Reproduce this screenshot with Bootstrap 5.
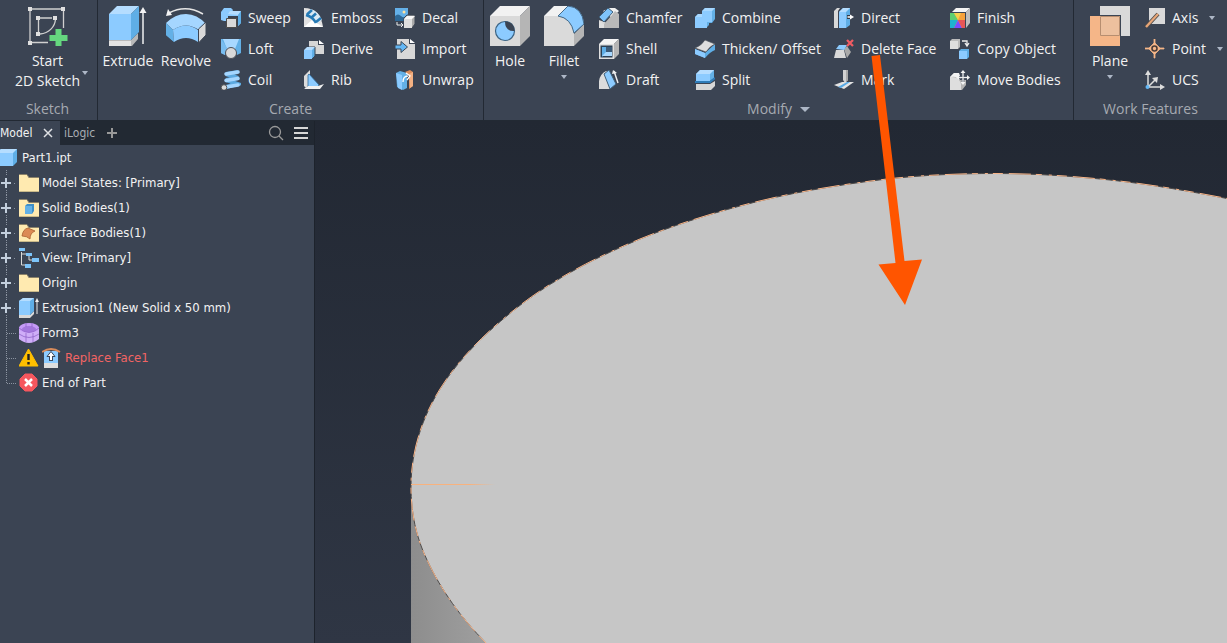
<!DOCTYPE html>
<html lang="en">
<head>
<meta charset="utf-8">
<meta name="viewport" content="width=device-width, initial-scale=1">
<title>Part1.ipt</title>
<link href="https://cdn.jsdelivr.net/npm/bootstrap@5.3.0/dist/css/bootstrap.min.css" rel="stylesheet">
<style>
:root{--panel:#3b4453;--dark:#222933}
body{background:var(--dark);color:#f2f2f2;font-family:"Open Sans","Noto Sans",sans-serif;font-size:14px;line-height:20px}
svg{display:block;flex:none}
button{color:inherit;background:none;border:0;padding:0;white-space:nowrap}
.ribbon{background:var(--panel);height:121px;border-bottom:1px solid var(--dark)}
.group{border-right:1px solid var(--dark);flex:none}
.group.wide{flex:1 0 0;border-right:0}
.tools{height:99px;padding-top:2px}
.stack{display:grid;grid-template-rows:repeat(3,31px);flex:none}
.small-tool{display:flex;align-items:center;gap:7px;text-align:left}
.big-tool{display:flex;flex-direction:column;align-items:center;padding-top:4px;flex:none;align-self:flex-start}
.big-tool svg.ic{margin-bottom:5px}
.group-name{color:#a6aab1;text-align:center;line-height:20px}
.caret{width:0;height:0;border:3px solid transparent;border-top:4px solid #adb7c6;border-bottom:0;display:inline-block;flex:none}
.caret.lg{border-width:5px 5px 0}
.sketch-caret{right:7px;top:71px}
.g-sketch{width:98px;padding-right:2px}.g-create{width:386px}.g-modify{width:590px}
.after-big{margin-left:7px}
.lead-in{padding-left:4px}
.w-52{width:52px}.w-56{width:56px}.w-83{width:83px}.w-91{width:91px}.w-96{width:96px}.w-116{width:116px}.w-139{width:139px}
.browser{width:315px;background:var(--panel);border-right:1px solid #1d232c;font-family:"DejaVu Sans Condensed","DejaVu Sans",sans-serif;font-size:13px;flex:none}
.tabs{background:var(--dark);height:24px;font-size:12px}
.tab-on{background:var(--panel);width:60px;height:24px;padding-right:7px}
.add-tab{margin-left:11px}
.dim{color:#a9adb3}
.tree{margin:0;padding:0;list-style:none}
.tree li{height:25px;display:flex;align-items:center;gap:3px;white-space:nowrap}
.twig{width:16px;height:25px;flex:none}
.failed{color:#f26464}
.view{background:linear-gradient(#222833,#2f3644);min-width:0}
.pointer{position:absolute;left:860px;top:50px;pointer-events:none}
</style>
</head>
<body class="d-flex flex-column vh-100 overflow-hidden position-relative">

<header class="ribbon d-flex">
  <section class="group g-sketch" aria-label="Sketch">
    <div class="tools position-relative">
      <button class="big-tool w-100">
        <svg class="ic" width="42" height="40" viewBox="0 0 42 40" fill="none" stroke="#d0d0d0" stroke-width="1.3"><path d="M5 3H34M3 5V35M36.500 5V22M5 36.500H21"/><path d="M13 12H25M11.500 14V26M28.500 13C28 21 22 27 13 28"/><g fill="#e0e0e0" stroke="none"><path d="M1 1h4v4H1zM34 1h4v4h-4zM1 35h4v4H1zM9 10h4v4H9zM26 10h4v4h-4zM9 26h4v4H9z"/></g><path d="M31.500 23v18M22.500 32h18" stroke="#65d77f" stroke-width="6"/></svg>
        <span>Start</span><span>2D Sketch</span>
      </button>
      <span class="caret sketch-caret position-absolute"></span>
    </div>
    <div class="group-name">Sketch</div>
  </section>

  <section class="group g-create" aria-label="Create">
    <div class="tools d-flex lead-in">
      <button class="big-tool w-52">
        <svg class="ic" width="40" height="40" viewBox="0 0 40 40"><path d="M1 34h22l7-7v6l-6 7H1z" fill="#b8b8b8"/><path d="M1 35h22v5H1z" fill="#e2e2e2"/><path d="M1 8h22v26H1z" fill="#8ccbff"/><path d="M1 8l8-8h22l-8 8z" fill="#b5ddff"/><path d="M23 8l8-8v26l-8 8z" fill="#5faee6"/><path d="M35 38V4" stroke="#f0f0f0" stroke-width="1.500"/><path d="M35 1l3.500 6h-7z" fill="#f4f4f4"/></svg>
        <span>Extrude</span>
      </button>
      <button class="big-tool w-56 ms-1">
        <svg class="ic" width="40" height="40" viewBox="0 0 40 40"><path d="M0 17L8 36 0 29z" fill="#63b0e6"/><path d="M0 17Q9 8 20 8T40 18L33 24Q20 15 7 24z" fill="#a5d6ff"/><path d="M0 17l7 7 1 12-8-7z" fill="#63b0e6"/><path d="M7 24Q20 15 32 24V36Q20 28 8 36z" fill="#8ccbff"/><path d="M32.500 23L40 16v13l-7.500 8z" fill="#d9d9d9" stroke="#3b4453"/><path d="M3 7Q20-2 37 8" fill="none" stroke="#e6e6e6" stroke-width="1.500"/><path d="M0 10L2 3l4 6z" fill="#f4f4f4"/></svg>
        <span>Revolve</span>
      </button>
      <div class="stack after-big w-83">
        <button class="small-tool"><svg width="20" height="20" viewBox="0 0 20 20"><path d="M0 4l3-4h7l2 2-1 2h6l3-1v12l-3 3V8H7v5H3l-3-1z" fill="#8ccbff"/><path d="M7 6l2-3h11l-3 4z" fill="#b5ddff"/><path d="M17 7l3-4v12l-3 3z" fill="#5faee6"/><path d="M5.500 10.500h10v9h-10z" fill="#d9d9d9" stroke="#4d4b49"/></svg>Sweep</button>
        <button class="small-tool"><svg width="20" height="20" viewBox="0 0 20 20"><path d="M0 0h20v14l-4 2-2-6H6l-2 6-4-2z" fill="#63b0e6"/><path d="M2 0h16l-4 10H6z" fill="#a8d8ff"/><path d="M0 0l6 9-2 7-4-2z" fill="#79bdf0"/><circle cx="10" cy="14" r="5.500" fill="#d9d9d9" stroke="#4d5058"/></svg>Loft</button>
        <button class="small-tool"><svg width="20" height="20" viewBox="0 0 20 20"><g fill="none" stroke="#5ca9e0" stroke-width="4"><path d="M17 2L5 4l12 4L5 10l12 4L5 17"/></g><g stroke="#a5d6ff" stroke-width="3.500" stroke-linecap="round"><path d="M5 4l12-2M5 10.500l12-2M5 17l12-2"/></g><circle cx="3" cy="17.500" r="2.800" fill="#d9d9d9" stroke="#555"/></svg>Coil</button>
      </div>
      <div class="stack w-91">
        <button class="small-tool"><svg width="20" height="20" viewBox="0 0 20 20"><path d="M0 0q16 0 19 19H0z" fill="#e2e2e2"/><path d="M0 19l8-7 11 7z" fill="#fff"/><path d="M1 7L7 1Q15 4 18 12l-5 4Q9 9 1 7z" fill="#dbe9f3"/><path d="M2 7Q9 9 12 15M3 6.500L8 2M7.500 9.500L12 5.500M12 14L17 10" stroke="#267ab5" stroke-width="2.600" fill="none"/></svg>Emboss</button>
        <button class="small-tool"><svg width="20" height="20" viewBox="0 0 20 20"><path d="M5 2h9v4h6v9h-9V9H5z" fill="#d6d6d6"/><path d="M15 1l5 4h-5z" fill="#fff"/><path d="M0 11l3-3h8v9l-3 3H0z" fill="#5faee6" stroke="#3b4453"/><path d="M0 11h8v9H0z" fill="#8ccbff"/><path d="M0 11l3-3h8l-3 3z" fill="#b5ddff"/></svg>Derive</button>
        <button class="small-tool"><svg width="20" height="20" viewBox="0 0 20 20"><path d="M0 6l6-6v13l-4 5-2-2z" fill="#dcdcdc"/><path d="M5 4l10 11-2 2H4V5z" fill="#8ccbff" stroke="#2f6b99" stroke-width=".8"/><path d="M0 19l4-3h10l6-2-4 5z" fill="#f0f0f0"/></svg>Rib</button>
      </div>
      <div class="stack">
        <button class="small-tool"><svg width="20" height="20" viewBox="0 0 20 20"><path d="M0 0h13v13H0z" fill="#64b0e8"/><path d="M0 8q3-3 6 0t7-1v6H0z" fill="#2e6896"/><circle cx="9" cy="4" r="1.500" fill="#ffe2a0"/><path d="M9 10l3-3h8v9l-3 4H9z" fill="#aaa" stroke="#3b4453"/><path d="M9 11h8v9H9z" fill="#dedede"/><path d="M9 11l3-3h8l-3 3z" fill="#f8f8f8"/><path d="M2 14v3h6M6 15l2 2-2 2" fill="none" stroke="#eee"/></svg>Decal</button>
        <button class="small-tool"><svg width="20" height="20" viewBox="0 0 20 20"><path d="M2 0h12v5h6v15H2z" fill="#d8d8d8"/><path d="M15 0l5 4h-5z" fill="#fff"/><path d="M0 6h6V2.500L12.500 8 6 13.500V10H0z" fill="#63b7f5" stroke="#3a4756"/></svg>Import</button>
        <button class="small-tool"><svg width="20" height="20" viewBox="0 0 20 20"><path d="M1 3l4-2 7 2v15l-4 2-6-3z" fill="#63b0e6"/><path d="M1 3l6 2v15l-4-2z" fill="#8ccbff"/><path d="M10 2l5-2 3 2v14l-4 3V5z" fill="#d98c5b"/><path d="M14 4l4-2v14l-3 2z" fill="#f3b183"/><path d="M8 12q0-6 5-6M11 3l4 3-3 4" fill="none" stroke="#fff" stroke-width="1.300"/></svg>Unwrap</button>
      </div>
    </div>
    <div class="group-name">Create</div>
  </section>

  <section class="group g-modify" aria-label="Modify">
    <div class="tools d-flex">
      <button class="big-tool w-52">
        <svg class="ic" width="40" height="40" viewBox="0 0 40 40"><path d="M0 10h30v30H0z" fill="#dadada"/><path d="M0 10L10 0h30L30 10z" fill="#f2f2f2"/><path d="M30 10L40 0v30L30 40z" fill="#b5b5b5"/><circle cx="15" cy="25" r="9.500" fill="#8ccbff" stroke="#3c6484" stroke-width="1.200"/><path d="M15 15.500q0 10 9.500 9.500q0-9-9.500-9.500z" fill="#3b4453"/></svg>
        <span>Hole</span>
      </button>
      <button class="big-tool w-56">
        <svg class="ic" width="40" height="40" viewBox="0 0 40 40"><path d="M0 10L10 0h14l-10 10z" fill="#f2f2f2"/><path d="M30 28l10-10v12L30 40z" fill="#b5b5b5"/><path d="M0 10h14q14 2 16 18v12H0z" fill="#dadada"/><path d="M14 10L24 0q14 1 16 18l-10 9Q27 12 14 10z" fill="#8ccbff" stroke="#456b8a"/></svg>
        <span>Fillet</span><span class="caret mt-1"></span>
      </button>
      <div class="stack w-96 after-big">
        <button class="small-tool"><svg width="20" height="20" viewBox="0 0 20 20"><path d="M0 12l8 3 5 5H0z" fill="#dadada"/><path d="M4 3l7-3h5l4 3-7 7z" fill="#f0f0f0"/><path d="M5 16l8-9 3-4 4 3v14H0v-6z" fill="#b9b9b9"/><path d="M0 13l5 3v4H0z" fill="#e0e0e0"/><path d="M0 9L9 0l5 4-9 10z" fill="#7fc3fa" stroke="#41607a"/></svg>Chamfer</button>
        <button class="small-tool"><svg width="20" height="20" viewBox="0 0 20 20"><path d="M0 5h15v15H0z" fill="#e0e0e0"/><path d="M0 5l5-5h15l-5 5z" fill="#f4f4f4"/><path d="M15 5l5-5v15l-5 5z" fill="#b5b5b5"/><path d="M1.500 6.500h12v12h-12z" fill="#2d4155"/><path d="M3 8h4v6l-4 4z" fill="#5faee6"/><path d="M7 8h6v6H7z" fill="#3b5a78"/><path d="M7 13h6v4H3z" fill="#a8d8ff"/></svg>Shell</button>
        <button class="small-tool"><svg width="20" height="20" viewBox="0 0 20 20"><path d="M0 11q1-7 7-10l4 1v17H0z" fill="#dcdcdc"/><path d="M5 4l5-4 7 14-6 5z" fill="#8ccbff" stroke="#41607a"/><path d="M15 1l4 12" stroke="#eee" stroke-width="1.500"/><path d="M13 4l1-4 4 3z" fill="#eee"/></svg>Draft</button>
      </div>
      <div class="stack w-139">
        <button class="small-tool"><svg width="20" height="20" viewBox="0 0 20 20"><path d="M7 3l3-3h10v11l-3 4h-3v2l-3 3H0V9l3-3h4z" fill="#63b0e6"/><path d="M7 3h10v11h-5v6H0V9h7z" fill="#8ccbff"/><path d="M7 3l3-3h10l-3 3zM0 9l3-3h4v3z" fill="#a8d8ff"/></svg>Combine</button>
        <button class="small-tool"><svg width="20" height="20" viewBox="0 0 20 20"><path d="M0 10l10 4 10-9v6q-5 2-10 8L0 15z" fill="#5faee6"/><path d="M0 10l10 4v5L0 15z" fill="#8ccbff"/><path d="M0 9Q6 7 10 1l10 4q-5 2-9 8z" fill="#dedede" stroke="#50565f" stroke-width=".7"/></svg>Thicken/ Offset</button>
        <button class="small-tool"><svg width="20" height="20" viewBox="0 0 20 20"><path d="M1 14h14l5-3v5l-4 4H1z" fill="#d6d6d6"/><path d="M1 4l4-4h14v8l-4 3H1z" fill="#63b0e6"/><path d="M1 4h14v7H1z" fill="#8ccbff"/><path d="M1 4l4-4h14l-4 4z" fill="#b5ddff"/><path d="M0 12h15l5-4" stroke="#2f7cb8" stroke-width="1.800" fill="none"/></svg>Split</button>
      </div>
      <div class="stack w-116">
        <button class="small-tool"><svg width="20" height="20" viewBox="0 0 20 20"><path d="M0 3l3-3h3L4 3v17H0z" fill="#d9d9d9"/><path d="M5 4l4-4h7v17l-4 3H5z" fill="#5faee6"/><path d="M5 4h7v16H5z" fill="#8ccbff"/><path d="M5 4l4-4h7l-4 4z" fill="#b5ddff"/><path d="M13 9h4" stroke="#333a46" stroke-width="4"/><path d="M13.500 9h3" stroke="#fff" stroke-width="1.500"/><path d="M16 6.500l4 2.500-4 2.500z" fill="#fff"/></svg>Direct</button>
        <button class="small-tool"><svg width="20" height="20" viewBox="0 0 20 20"><path d="M2 11h8l2 8H0z" fill="#d9d9d9"/><path d="M10 10l3-3 4 6-4 6z" fill="#a9a9a9"/><path d="M2 10l3-4h8l-3 5z" fill="#8ccbff"/><path d="M13 1l6 6M19 1l-6 6" stroke="#f05c63" stroke-width="2.300"/></svg>Delete Face</button>
        <button class="small-tool"><svg width="20" height="20" viewBox="0 0 20 20"><path d="M0 15l8-3h12l-10 7z" fill="#e3e3e3"/><path d="M4 17l9-5 3 0-9 6z" fill="#57a9e5"/><path d="M9 0h5v10l-3 3-2-3z" fill="#d2d2d2"/><path d="M12 0h2v10l-2 2z" fill="#aaa"/></svg>Mark</button>
      </div>
      <div class="stack">
        <button class="small-tool"><svg width="20" height="20" viewBox="0 0 20 20"><path d="M2 4l4-4h14l-4 4z" fill="#f4f4f4"/><path d="M16 4l4-4v15l-4 5z" fill="#bdbdbd"/><path d="M0 5h15v15H0z" fill="#f6a13a"/><path d="M0 5h4l4 7-8 1z" fill="#5fce72"/><path d="M4 5h7l-3 7z" fill="#f7d04c"/><path d="M0 12h8l-4 8H0z" fill="#1fb3ce"/><path d="M8 12l4 8H4z" fill="#7b4dff"/><path d="M8 12h7v8h-3z" fill="#e85656"/></svg>Finish</button>
        <button class="small-tool"><svg width="20" height="20" viewBox="0 0 20 20"><path d="M0 2l2-2h8v8l-2 2H0z" fill="#bcbcbc"/><path d="M0 2h8v8H0z" fill="#dedede"/><path d="M9 12l2-2h8v8l-2 2H9z" fill="#5faee6"/><path d="M9 12h8v8H9z" fill="#8ccbff"/><path d="M12 2h5v4M15 4l2 3 2-3" stroke="#eee" fill="none" stroke-width="1.300"/></svg>Copy Object</button>
        <button class="small-tool"><svg width="20" height="20" viewBox="0 0 20 20"><path d="M0 7l4-4 5 0 1 7 6 0v5l-4 5H0z" fill="#b4b4b4"/><path d="M0 7q9-1 11 7v6H0z" fill="#dedede"/><path d="M0 7l4-4h5l2 6q-4-3-11-2z" fill="#f3f3f3"/><path d="M13 2v11M8 7.500h10" stroke="#596270" stroke-width="2.500"/><path d="M13 2v11M8 7.500h10" stroke="#eee" stroke-width="1.200"/><path d="M13 0l2.500 3h-5zM13 15l2.500-3h-5zM6 7.500L9 5v5zM20 7.500L17 5v5z" fill="#f4f4f4"/></svg>Move Bodies</button>
      </div>
    </div>
    <div class="group-name d-flex justify-content-center align-items-center gap-2">Modify<span class="caret lg"></span></div>
  </section>

  <section class="group wide" aria-label="Work Features">
    <div class="tools d-flex lead-in">
      <button class="big-tool w-56 ms-1">
        <svg class="ic" width="40" height="40" viewBox="0 0 40 40"><path d="M10 0h30v30H10z" fill="#d9d9d9"/><path d="M-1 9h32v31H-1z" fill="#3b4453"/><path d="M0 10h30v30H0z" fill="#f5b688"/><path d="M10.500 10.500h19v19h-19z" fill="#edc09e" stroke="#b78e70"/></svg>
        <span>Plane</span><span class="caret mt-1"></span>
      </button>
      <div class="stack after-big">
        <button class="small-tool"><svg width="20" height="20" viewBox="0 0 20 20"><path d="M4 0h16v16H4z" fill="#d9d9d9"/><path d="M1 19L13 6" stroke="#4d4b49" stroke-width="4"/><path d="M1 19L13 6" stroke="#e8a678" stroke-width="2.300"/></svg>Axis<span class="caret ms-1"></span></button>
        <button class="small-tool"><svg width="20" height="20" viewBox="0 0 20 20"><path d="M9 0h1v4l5 5h4v1h-4l-5 5v4H9v-4l-5-5H0V9h4l5-5z" fill="#f5b688" stroke="#f5b688" stroke-width=".8"/><circle cx="9.500" cy="9.500" r="2.500" fill="#f5b688" stroke="#4b3d38" stroke-width="1.600"/></svg>Point<span class="caret ms-1"></span></button>
        <button class="small-tool"><svg width="20" height="20" viewBox="0 0 20 20"><path d="M3 16V4M4 17h12M4 16l6-6" stroke="#ddd" stroke-width="1.500"/><path d="M3 0l3 5H0zM20 17l-5-3v6zM13 7l-1 6-5-5z" fill="#ddd"/><circle cx="2.500" cy="17" r="2" fill="#63b7f5"/></svg>UCS</button>
      </div>
    </div>
    <div class="group-name">Work Features</div>
  </section>
</header>

<main class="d-flex flex-grow-1">
  <aside class="browser">
    <nav class="tabs d-flex align-items-center">
      <button class="tab-on d-flex align-items-center justify-content-between">Model<svg width="10" height="10" viewBox="0 0 10 10" stroke="#dfe1e4" stroke-width="1.500"><path d="M1 1l8 8M9 1L1 9"/></svg></button>
      <button class="dim ms-1">iLogic</button>
      <button class="add-tab" aria-label="Add tab"><svg width="12" height="12" viewBox="0 0 12 12" stroke="#999" stroke-width="2"><path d="M6 1v10M1 6h10"/></svg></button>
      <button class="ms-auto" aria-label="Search"><svg width="16" height="16" viewBox="0 0 16 16" fill="none" stroke="#9a9a9a" stroke-width="1.300"><circle cx="7" cy="7" r="5.500"/><path d="M11 11l4 4"/></svg></button>
      <button class="ms-2 me-1" aria-label="Menu"><svg width="18" height="14" viewBox="0 0 18 14" stroke="#d6d6d6" stroke-width="2"><path d="M2 2h14M2 7h14M2 12h14"/></svg></button>
    </nav>
    <ul class="tree">
      <li><svg width="19" height="20" viewBox="1 0 19 20"><path d="M-3 5l5-4h16v13l-4 4H-3z" fill="#5faee6"/><path d="M-3 5h17v13H-3z" fill="#8ccbff"/><path d="M-3 5l5-4h16l-4 4z" fill="#b5ddff"/></svg>Part1.ipt</li>
      <li><svg class="twig" viewBox="0 0 16 25"><use href="#knot"/></svg><svg width="20" height="20"><use href="#folder"/></svg>Model States: [Primary]</li>
      <li><svg class="twig" viewBox="0 0 16 25"><use href="#knot"/></svg><svg width="20" height="20"><use href="#folder"/><path d="M6 8l2-2h7v7l-2 3H6z" fill="#3e8fc9"/><path d="M6 8h7v8H6z" fill="#63b0e6"/></svg>Solid Bodies(1)</li>
      <li><svg class="twig" viewBox="0 0 16 25"><use href="#knot"/></svg><svg width="20" height="20"><use href="#folder"/><path d="M3 13q1-7 6-8l7 3q-5 2-5 8-3-3-8-3z" fill="#dc8a55" stroke="#a8602f" stroke-width=".8"/></svg>Surface Bodies(1)</li>
      <li><svg class="twig" viewBox="0 0 16 25"><use href="#knot"/></svg><svg width="20" height="20"><path d="M2.500 4v13H6M2.500 6H7M10 8v4h4" fill="none" stroke="#d9d9d9"/><path d="M0 0h6v3H0zM7 5h6v3H7zM13 10h7v4h-7zM6 16h6v4H6z" fill="#7cc4fa"/></svg>View: [Primary]</li>
      <li><svg class="twig" viewBox="0 0 16 25"><use href="#knot"/></svg><svg width="20" height="20"><use href="#folder"/></svg>Origin</li>
      <li><svg class="twig" viewBox="0 0 16 25"><use href="#knot"/></svg><svg width="20" height="20"><path d="M0 17h11l4-4v3l-4 4H0z" fill="#d9d9d9"/><path d="M0 3l4-3h11v13l-4 4H0z" fill="#5faee6"/><path d="M0 3h11v14H0z" fill="#8ccbff"/><path d="M0 3l4-3h11l-4 3z" fill="#b5ddff"/><path d="M18 16V3" stroke="#eee"/><path d="M18 0l2 4h-4z" fill="#eee"/></svg>Extrusion1 (New Solid x 50 mm)</li>
      <li><svg class="twig" viewBox="0 0 16 25"><path d="M6.500 0v25M7 13.500h9" stroke="#8b93a0" stroke-dasharray="1 1"/></svg><svg width="20" height="20"><path d="M0 4v12q10 8 20 0V4z" fill="#cfaef8"/><ellipse cx="10" cy="5" rx="10" ry="5" fill="#c49bf6"/><ellipse cx="10" cy="6" rx="7" ry="3" fill="#a377dd"/><path d="M0 11q10 7 20 0M7 10v9M14 10v9M0 5q10 9 20 0M7 0v4M13 0v4" fill="none" stroke="#8a5cc4" stroke-width=".7"/></svg>Form3</li>
      <li><svg class="twig" viewBox="0 0 16 25"><path d="M6.500 0v25M7 13.500h9" stroke="#8b93a0" stroke-dasharray="1 1"/></svg><svg width="20" height="20"><path d="M9.500 1L19 18H0z" fill="#ffbf00" stroke="#ffbf00" stroke-linejoin="round"/><path d="M9.500 6v6M9.500 14v2.500" stroke="#222" stroke-width="2.400"/></svg><svg width="20" height="20"><path d="M2 3h14v12H2z" fill="#8ccbff"/><path d="M2 15h14v5H2z" fill="#dedede"/><path d="M0 4Q9-2 18 4" fill="none" stroke="#d98c5b" stroke-width="1.800"/><path d="M9 13V7" stroke="#3a4658" stroke-width="4"/><path d="M9 3.500L13 8.500H5z" fill="#fff" stroke="#3a4658"/><path d="M9 12V7" stroke="#fff" stroke-width="2"/></svg><span class="failed">Replace Face1</span></li>
      <li><svg class="twig" viewBox="0 0 16 25"><path d="M6.500 0v14M7 13.500h9" stroke="#8b93a0" stroke-dasharray="1 1"/></svg><svg width="20" height="20"><path d="M6 1h7l5 5v7l-5 5H6l-5-5V6z" fill="#f5575e" stroke="#f5575e"/><path d="M6 6l7 7M13 6l-7 7" stroke="#fff" stroke-width="2.500"/></svg>End of Part</li>
    </ul>
  </aside>

  <section class="view flex-grow-1" aria-label="Model view">
    <svg width="100%" height="100%" viewBox="315 121 912 522" preserveAspectRatio="xMinYMin slice">
      <defs>
        <linearGradient id="side"><stop stop-color="#8d8d8d"/><stop offset="1" stop-color="#a0a0a0"/></linearGradient>
        <linearGradient id="seam"><stop stop-color="#f8b27e"/><stop offset=".7" stop-color="#f8b27e"/><stop offset="1" stop-color="#f8b27e" stop-opacity="0"/></linearGradient>
        <g id="folder"><path d="M0 2h8l2 3h10v14H0z" fill="#ffeab0"/><path d="M0 1.500h8l2 3h10" fill="none" stroke="#8b826a"/><path d="M0 18.500h20" stroke="#c9b98a"/></g>
        <g id="knot"><path d="M6.500 0v25M14 13.500h2" stroke="#8b93a0" stroke-dasharray="1 1"/><path d="M6 6v14M0 13h12" stroke="#3b4453" stroke-width="4"/><path d="M6 8v10M1 13h10" stroke="#c3cfdd" stroke-width="2"/></g>
        <path id="rim" d="M486 643C461 618 441 590 427 560C416 537 411 513 411 487C411 450 423 416 440 389C461 355 493 326 523 303C559 276 599 256 640 239C672 226 706 215 740 206C788 193 837 185 887 179C923 175 959 173.500 995 173.500C1033 173.500 1072 176 1110 180C1149 184 1188 191 1227 198.500"/>
      </defs>
      <path d="M411 487V643H490V560z" fill="url(#side)"/>
      <path d="M486 643C461 618 441 590 427 560C416 537 411 513 411 487C411 450 423 416 440 389C461 355 493 326 523 303C559 276 599 256 640 239C672 226 706 215 740 206C788 193 837 185 887 179C923 175 959 173.500 995 173.500C1033 173.500 1072 176 1110 180C1149 184 1188 191 1227 198.500V643z" fill="#c6c6c6"/>
      <use href="#rim" fill="none" stroke="#4f4b49"/>
      <use href="#rim" fill="none" stroke="#f8b488" stroke-dasharray="10 6 22 5 6 7 3 5"/>
      <path d="M411 484h84v1h-84z" fill="url(#seam)"/>
    </svg>
  </section>
</main>

<svg class="pointer" width="70" height="260" viewBox="860 50 70 260" aria-hidden="true"><path d="M871.500 56l8.500-1 24.500 206 17.500-1.500-17 45.500-26.500-40.500 17-1.500z" fill="#ff5500"/></svg>
<script src="https://cdn.jsdelivr.net/npm/bootstrap@5.3.0/dist/js/bootstrap.bundle.min.js"></script>
</body>
</html>
